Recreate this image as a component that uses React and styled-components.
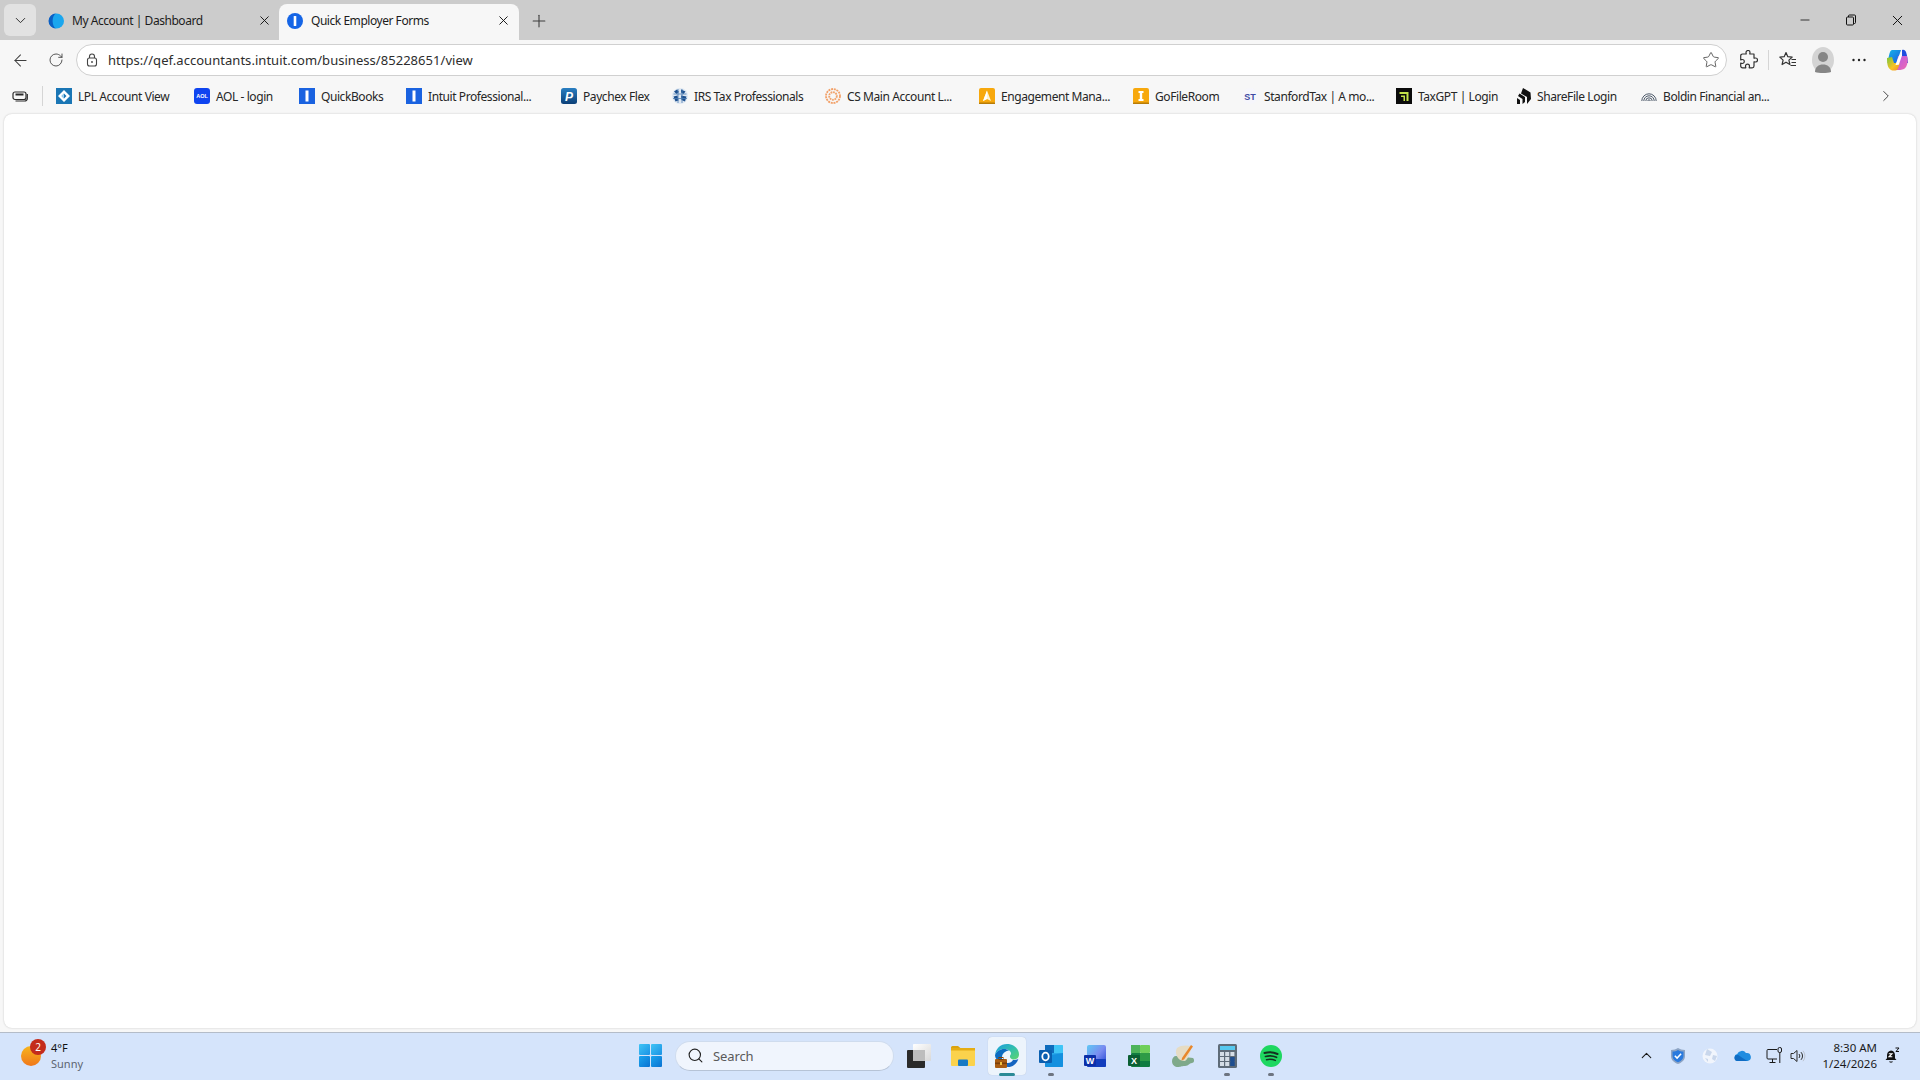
import React from "react";
import styled, { createGlobalStyle } from "styled-components";
import { ChevronDown, X, Plus, ArrowLeft, RotateCw, Star, Minus, ChevronRight, ChevronUp, Search as SearchIcon } from "lucide-react";

const Global = createGlobalStyle`
  html, body { margin: 0; padding: 0; width: 1920px; height: 1080px; overflow: hidden; background: #f7f7f7; }
  body { font-family: "Noto Sans", "Open Sans", sans-serif; color: #1f1f1f; }
`;

const Page = styled.div`
  width: 1920px; height: 1080px; display: flex; flex-direction: column; background: #f7f7f7;
`;

/* ---------- tab strip ---------- */
const TabStrip = styled.div`
  height: 40px; background: #cccccc; display: flex; align-items: flex-end; padding-left: 4px; flex: none;
`;
const TabMenu = styled.div`
  width: 32px; height: 32px; margin-bottom: 4px; border-radius: 6px; background: #e2e2e2;
  display: flex; align-items: center; justify-content: center; color: #333;
`;
const Tab = styled.div`
  width: 240px; height: 36px; box-sizing: border-box; display: flex; align-items: center; padding: 0 8px 3px;
  border-radius: 8px 8px 0 0; background: ${p => (p.$active ? "#f7f7f7" : "transparent")};
  margin-left: ${p => p.$ml || 0}px;
`;
const TabTitle = styled.span`
  flex: 1; margin-left: 8px; font-size: 12px; letter-spacing: -0.46px; color: #1c1c1c; white-space: nowrap;
`;
const NewTab = styled.div`
  width: 32px; height: 36px; margin-left: 4px; padding-bottom: 3px; box-sizing: border-box; display: flex; align-items: center; justify-content: center; color: #3c3c3c;
`;
const Spacer = styled.div`flex: 1;`;
const WinBtn = styled.div`
  width: 46px; height: 40px; align-self: flex-start; display: flex; align-items: center; justify-content: center; color: #111;
`;

/* ---------- toolbar ---------- */
const Toolbar = styled.div`
  height: 36px; flex: none; box-sizing: border-box; padding-top: 4px; display: flex; align-items: flex-start; background: #f7f7f7;
`;
const NavBtn = styled.div`
  width: 36px; height: 32px; margin-left: ${p => p.$ml || 0}px; display: flex; align-items: center; justify-content: center; color: #3d3d3d; flex: none;
`;
const AddressBar = styled.div`
  width: 1651px; height: 32px; box-sizing: border-box; margin-left: 2px; border: 1px solid #d0d0d0; border-radius: 16px; background: #fff;
  display: flex; align-items: center; padding: 0 6px 0 8px; flex: none;
`;
const Url = styled.span`
  flex: 1; margin-left: 9px; font-size: 13px; letter-spacing: 0.04px; color: #2d2d2d; white-space: nowrap;
`;
const ToolIcons = styled.div`
  flex: 1; height: 32px; display: flex; align-items: center; padding-left: 11px; color: #333;
`;
const ToolSep = styled.div`
  width: 1px; height: 20px; background: #d5d5d5; margin: 0 9px 0 10px;
`;

/* ---------- bookmarks ---------- */
const BookmarkBar = styled.div`
  height: 38px; flex: none; box-sizing: border-box; padding: 2px 0 0 12px; display: flex; align-items: center; background: #f7f7f7;
`;
const BarSep = styled.div`
  width: 1px; height: 20px; background: #d5d5d5; margin: 0 13px 0 14px;
`;
const Bookmark = styled.div`
  display: flex; align-items: center; gap: 6px; margin-right: ${p => p.$gap ?? 23}px; flex: none;
`;
const BookmarkLabel = styled.span`
  display: block; width: ${p => p.$w}px; font-size: 12px; letter-spacing: -0.42px; color: #262626; white-space: nowrap;
`;
const BarMore = styled.div`
  margin-left: auto; width: 34px; padding-right: 17px; display: flex; justify-content: center; color: #333;
`;

/* ---------- content ---------- */
const Viewport = styled.div`
  flex: 1; margin: 0 4px 4px; background: #fff; border-radius: 8px;
  box-shadow: 0 0 2px rgba(0,0,0,.22);
`;

/* ---------- taskbar ---------- */
const Taskbar = styled.div`
  height: 48px; flex: none; box-sizing: border-box; border-top: 1px solid #b4bcc8; background: #d5e4fb; padding-bottom: 2px;
  display: flex; align-items: center; position: relative;
`;
const Weather = styled.div`
  width: 639px; flex: none; box-sizing: border-box; padding-left: 21px; display: flex; align-items: center; gap: 10px;
`;
const Sun = styled.div`
  position: relative; width: 20px; height: 20px; border-radius: 50%;
  background: linear-gradient(180deg, #f7b51d, #f0771a);
`;
const Badge = styled.span`
  position: absolute; left: 9px; top: -7px; width: 16px; height: 16px;
  border-radius: 50%; background: #c42b1c; color: #fff; font-size: 10px; line-height: 16px; text-align: center;
`;
const WeatherText = styled.div`display: flex; flex-direction: column;`;
const Temp = styled.span`font-size: 11px; line-height: 16px; color: #111;`;
const Cond = styled.span`font-size: 11px; line-height: 16px; color: #5c6470;`;
const StartBtn = styled.div`width: 24px; height: 24px; display: flex; align-items: center; flex: none;`;
const SearchPill = styled.div`
  width: 219px; height: 30px; box-sizing: border-box; margin-left: 12px; border-radius: 15px; background: #f0f5fd;
  border: 1px solid #cfdcee; border-bottom-color: #b6c3d6; display: flex; align-items: center; padding-left: 11px; gap: 9px; flex: none;
`;
const SearchText = styled.span`font-size: 13px; letter-spacing: -0.1px; color: #5a5a5a;`;
const Apps = styled.div`display: flex; align-items: center; margin-left: 3px; flex: none;`;
const AppBtn = styled.div`
  position: relative; width: 44px; height: 38px; display: flex; align-items: center; justify-content: center; flex: none; border-radius: 4px;
  ${p => p.$active && `&::before { content: ""; position: absolute; left: 3px; right: 3px; top: 0; bottom: 0; background: #edf4fc; border-radius: 4px; box-shadow: 0 0 1px rgba(0,0,0,.2); }`}
  & > svg { position: relative; }
`;
const RunDot = styled.span`
  position: absolute; bottom: -1px; left: 50%; transform: translateX(-50%); height: 3px; border-radius: 2px;
  width: ${p => (p.$active ? 16 : 6)}px; background: ${p => (p.$active ? "#2b8a96" : "#6d7480")};
`;
const Tray = styled.div`
  position: absolute; right: 13px; top: 0; bottom: 2px; display: flex; align-items: center;
`;
const TrayIcon = styled.div`
  width: ${p => p.$w || 32}px; margin-left: ${p => p.$ml || 0}px; display: flex; justify-content: center; align-items: center; flex: none; color: #1a1a1a;
`;
const Clock = styled.div`
  display: flex; flex-direction: column; align-items: flex-end; margin-left: 16px; font-size: 11.500px; line-height: 16px; color: #1a1a1a;
`;

/* ---------- icons ---------- */
const EdgeFav = () => (
  <svg width="16" height="16" viewBox="0 0 16 16"><circle cx="8.500" cy="8" r="7.500" fill="#1aa6ee" /><path d="M8 .5a7.500 7.500 0 0 0 0 15c-2-1-3.400-4-3.400-7.500S6 1.500 8 .5z" fill="#0a5fc4" /></svg>
);
const IntuitRound = () => (
  <svg width="16" height="16" viewBox="0 0 16 16"><circle cx="8" cy="8" r="8" fill="#1565e6" /><rect x="6.700" y="3" width="2.600" height="10" rx=".6" fill="#fff" /></svg>
);
const IntuitSquare = () => (
  <svg width="16" height="16" viewBox="0 0 16 16"><rect width="16" height="16" fill="#1a62e0" /><rect x="6.500" y="2.500" width="3" height="11" fill="#fff" /></svg>
);
const LplIcon = () => (
  <svg width="16" height="16" viewBox="0 0 16 16"><rect width="16" height="16" fill="#1a76b5" /><path d="M8 2l6 6-6 6-6-6z M8 5.500L5.500 8 8 10.500 10.500 8z" fill="#fff" fillRule="evenodd" /><path d="M8 5.500L5.500 8 8 10.500z" fill="#9fd0ee" /></svg>
);
const AolIcon = () => (
  <svg width="16" height="16" viewBox="0 0 16 16"><rect width="16" height="16" rx="3" fill="#0f44f0" /><text x="8" y="10" textAnchor="middle" fontSize="5.500" fontWeight="700" fill="#fff" fontFamily="Liberation Sans">AOL</text></svg>
);
const PaychexIcon = () => (
  <svg width="16" height="16" viewBox="0 0 16 16"><defs><linearGradient id="pc" x1="0" y1="0" x2="0" y2="1"><stop offset="0" stopColor="#2a7fc2" /><stop offset="1" stopColor="#0b3f77" /></linearGradient></defs><rect width="16" height="16" rx="2.500" fill="url(#pc)" /><text x="8" y="12.500" textAnchor="middle" fontSize="12" fontWeight="700" fontStyle="italic" fill="#fff" fontFamily="Liberation Sans">P</text></svg>
);
const IrsIcon = () => (
  <svg width="16" height="16" viewBox="0 0 16 16"><circle cx="8" cy="8" r="8" fill="#dfe8f2" /><path d="M2 3.500l3-2 2 2.500-2.500 2zM9 1.500l4.500 2-2 2.500-2.500-1.500zM1.500 8.500l4-1 1 5-3 1zM9 7.500l5.500 1-1.500 5-3.500-1.500z" fill="#1c4f8e" /><path d="M1.500 6h13M1 10.500h14M6 1v14M10 1v14" stroke="#4d7bb0" strokeWidth=".8" /></svg>
);
const CsIcon = () => (
  <svg width="16" height="16" viewBox="0 0 16 16" fill="none"><circle cx="8" cy="8" r="7" stroke="#f2a068" strokeWidth="1.800" strokeDasharray="2 .8" /><circle cx="8" cy="8" r="3.800" stroke="#f0a36c" strokeWidth="1.800" strokeDasharray="1.800 .7" /></svg>
);
const EngIcon = () => (
  <svg width="16" height="16" viewBox="0 0 16 16"><rect width="16" height="16" rx="2" fill="#f7a80d" /><rect y="14.500" width="16" height="1.500" fill="#b87c06" /><path d="M8 2.500l4 10.500-4-2-4 2z" fill="#fff3d0" /><path d="M8 2.500L4 13l4-2z" fill="#fff" /></svg>
);
const GfrIcon = () => (
  <svg width="16" height="16" viewBox="0 0 16 16"><rect width="16" height="16" rx="2" fill="#f7a80d" /><rect y="14.500" width="16" height="1.500" fill="#b87c06" /><rect x="5.500" y="3" width="5" height="2" fill="#fff" /><rect x="6.800" y="4" width="2.400" height="8" fill="#fff" /><rect x="5.500" y="11" width="5" height="2" fill="#fff" /></svg>
);
const StIcon = () => (
  <svg width="16" height="16" viewBox="0 0 16 16"><circle cx="8" cy="8" r="8" fill="#f6f6fb" /><text x="8" y="11.500" textAnchor="middle" fontSize="9" fontWeight="700" fill="#3f4ba3" fontFamily="Liberation Sans">ST</text></svg>
);
const GptIcon = () => (
  <svg width="16" height="16" viewBox="0 0 16 16"><rect width="16" height="16" fill="#0b0b0b" /><path d="M3.500 4h9v9h-2V6h-7z M5 7.500h4v5.500H7.500V9H5z" fill="#c3e34a" /></svg>
);
const ShareIcon = () => (
  <svg width="14" height="16" viewBox="0 0 14 16"><path d="M6 0l7.500 4.500L14 11l-4 5V9L4 5.500zM2.500 5.500L8 9v5L5.500 16v-5L1 8zM0 10l3 2v4H0z" fill="#111" /></svg>
);
const BoldinIcon = () => (
  <svg width="16" height="16" viewBox="0 0 16 16" fill="none" stroke="#4f5b6b" strokeWidth="1"><path d="M.8 13a7.200 7.200 0 0 1 14.400 0M2.800 13a5.200 5.200 0 0 1 10.400 0M4.800 13a3.200 3.200 0 0 1 6.400 0M6.800 13a1.200 1.200 0 0 1 2.400 0" /></svg>
);
const TabsIcon = () => (
  <svg width="16" height="16" viewBox="0 0 16 16" fill="none" stroke="#2a2a2a" strokeWidth="1.200"><rect x="1" y="4" width="13" height="7.500" rx="2" /><path d="M3.500 6.500h8" strokeWidth="2" /><path d="M15.300 6v4.500a2.500 2.500 0 0 1-2.500 2.500H3.500" /></svg>
);
const Lock = () => (
  <svg width="14" height="14" viewBox="0 0 14 14" fill="none" stroke="#444" strokeWidth="1.100"><rect x="2.500" y="5" width="9" height="8" rx="2" /><path d="M4.500 5V3.500a2.500 2.500 0 0 1 5 0V5" /><circle cx="7" cy="9" r=".9" fill="#444" stroke="none" /></svg>
);
const Restore = () => (
  <svg width="12" height="12" viewBox="0 0 12 12" fill="none" stroke="#111"><rect x="1.500" y="3" width="7" height="8" rx="1" /><path d="M3.500 3V2a1 1 0 0 1 1-1h5a1 1 0 0 1 1 1v6.500a1 1 0 0 1-1 1h-1" /></svg>
);
const Puzzle = () => (
  <svg width="20" height="20" viewBox="0 0 20 20" fill="none" stroke="#333" strokeWidth="1.200" strokeLinejoin="round"><path d="M8 2.500a2 2 0 0 1 4 0c0 .8-.3 1.200-.2 1.500h4.200v4.200c.3.100.7-.2 1.500-.2a2 2 0 0 1 0 4c-.8 0-1.200-.3-1.500-.2V16c0 1-.8 1.800-1.800 1.800h-3c-.1-.4.300-.9.300-1.600a2 2 0 0 0-4 0c0 .7.400 1.200.3 1.600H4.500A1.800 1.800 0 0 1 2.700 16v-2.800c.4-.1.900.3 1.600.3a2 2 0 0 0 0-4c-.7 0-1.200.4-1.600.3V5.800A1.800 1.800 0 0 1 4.500 4h3.700c.1-.3-.2-.7-.2-1.500z" /></svg>
);
const FavList = () => (
  <svg width="20" height="20" viewBox="0 0 20 20" fill="none" stroke="#333" strokeWidth="1.200" strokeLinejoin="round"><path d="M8 2.500l1.800 4.200 4.400.4-3.300 3 1 4.400L8 12.200l-3.900 2.300 1-4.400-3.300-3 4.400-.4z" /><path d="M13.500 9.500h4.500M13.500 12.500h4.500M12.500 15.500h5.500" /></svg>
);
const Avatar = () => (
  <svg width="22" height="26" viewBox="0 0 22 26"><ellipse cx="11" cy="13" rx="11" ry="13" fill="#d4d4d4" /><circle cx="11" cy="10" r="5" fill="#868686" /><path d="M3 25c0-5 3.500-7.500 8-7.500s8 2.500 8 7.500c-2 .7-5 1-8 1s-6-.3-8-1z" fill="#868686" /></svg>
);
const Dots = () => (
  <svg width="16" height="4" viewBox="0 0 16 4"><circle cx="2.500" cy="2" r="1.200" fill="#222" /><circle cx="8" cy="2" r="1.200" fill="#222" /><circle cx="13.500" cy="2" r="1.200" fill="#222" /></svg>
);
const Copilot = () => (
  <svg width="23" height="24" viewBox="0 0 23 24">
    <defs>
      <linearGradient id="cA" x1="0" y1="0" x2="1" y2="1"><stop offset="0" stopColor="#16b5e8" /><stop offset="1" stopColor="#1c5be0" /></linearGradient>
      <linearGradient id="cB" x1="0" y1="0" x2="1" y2="1"><stop offset="0" stopColor="#b65be8" /><stop offset="1" stopColor="#f06ab0" /></linearGradient>
      <linearGradient id="cC" x1="0" y1="0" x2="1" y2="1"><stop offset="0" stopColor="#78c83a" /><stop offset=".6" stopColor="#f9c323" /><stop offset="1" stopColor="#f08a2b" /></linearGradient>
    </defs>
    <path d="M6 2h9l-4.500 13H1.500C3 9 3 3 6 2z" fill="url(#cA)" />
    <path d="M16 2c2-1 3.500.5 4 2 1.500 4 1.500 8 2 11h-6z" fill="#1f4de0" />
    <path d="M12 8h9c1.500 4 .5 11-3 13-2 1-5 1-8 1z" fill="url(#cB)" />
    <path d="M1 10c0 5 .5 10 4 12 1.500.7 4 .7 6 0 1-1 2-4 3-7H8L6 9z" fill="url(#cC)" />
    <path d="M9.500 17c1.200-3.500 2.300-6.500 3.500-9.500h3L12.800 16.800z" fill="#fff" />
  </svg>
);
const WinLogo = () => (
  <svg width="23" height="23" viewBox="0 0 23 23">
    <defs>
      <linearGradient id="w1" x1="0" y1="0" x2="1" y2="1"><stop offset="0" stopColor="#3fc4f5" /><stop offset="1" stopColor="#1b92e5" /></linearGradient>
      <linearGradient id="w2" x1="0" y1="0" x2="1" y2="1"><stop offset="0" stopColor="#1ba5ee" /><stop offset="1" stopColor="#0a72d2" /></linearGradient>
    </defs>
    <rect width="11" height="11" rx="1" fill="url(#w1)" /><rect x="12" width="11" height="11" rx="1" fill="url(#w1)" />
    <rect y="12" width="11" height="11" rx="1" fill="url(#w2)" /><rect x="12" y="12" width="11" height="11" rx="1" fill="url(#w2)" />
  </svg>
);
const Copy = () => (
  <svg width="24" height="24" viewBox="0 0 24 24">
    <defs><linearGradient id="cp" x1="0" y1="0" x2="1" y2="1"><stop offset="0" stopColor="#ffffff" /><stop offset="1" stopColor="#d8d8d8" /></linearGradient></defs>
    <rect x="6" y="0" width="18" height="17" rx="1" fill="url(#cp)" /><rect x="0" y="6" width="18" height="18" rx="1" fill="#2a2a2a" /><rect x="6" y="6" width="12" height="11" fill="#bdbdbd" />
  </svg>
);
const Folder = () => (
  <svg width="24" height="24" viewBox="0 0 24 24"><path d="M0 3.500A1.500 1.500 0 0 1 1.500 2h5.500l3 2.500h-10z" fill="#dba30f" /><rect y="4" width="24" height="3" fill="#e5ad14" /><path d="M0 6.500h24V21a1 1 0 0 1-1 1H1a1 1 0 0 1-1-1z" fill="#fbd24c" /><rect x="7" y="15.500" width="10" height="6.500" rx="1" fill="#1779c4" /></svg>
);
const EdgeWork = () => (
  <svg width="24" height="25" viewBox="0 0 24 25">
    <defs>
      <linearGradient id="e1" x1="0" y1="0" x2="1" y2="1"><stop offset="0" stopColor="#1b9de2" /><stop offset=".55" stopColor="#35c1a9" /><stop offset="1" stopColor="#5ed66a" /></linearGradient>
    </defs>
    <path d="M12 1c7 0 12 5 12 10.500 0 3.500-3 5.500-6 5-2.400-.4-3.300-2-3-3.500.2-1 1-1.500 1-2.500C16 8 13 6 9 6c-4 0-7.500 2.500-9 6C.8 5.500 5.500 1 12 1z" fill="url(#e1)" />
    <path d="M0 12c1.500-3.500 5-6 9-6 2 0 4 .5 5 1.500-4 .5-7 3.500-7 6.500v2H1.500C.5 15 0 13.500 0 12z" fill="#0c6cc2" />
    <path d="M18 17c2 .3 4 0 5.400-1.200C22 20.500 18 24 13 24c-1 0-2-.2-3-.5V20h3c2 0 4-1 5-3z" fill="#1565c0" />
    <rect x="0" y="16" width="12" height="9" rx="1" fill="#a85c13" /><rect x="0" y="19.500" width="12" height="1.600" fill="#7a3f0a" /><rect x="4" y="14.500" width="4" height="2" fill="none" stroke="#7a3f0a" /><rect x="5" y="19" width="2" height="3" fill="#f0c040" />
  </svg>
);
const Outlook = () => (
  <svg width="24" height="24" viewBox="0 0 24 24">
    <rect x="6" y="1" width="18" height="22" rx="1" fill="#28a8ea" /><rect x="6" y="1" width="9" height="8" fill="#0f6cbd" /><rect x="15" y="1" width="9" height="8" fill="#50d9ff" opacity=".6" />
    <path d="M6 12l18-3v13a1 1 0 0 1-1 1H7a1 1 0 0 1-1-1z" fill="#1490df" />
    <rect x="0" y="6" width="13" height="13" rx="1" fill="#0a5fb0" /><ellipse cx="6.500" cy="12.500" rx="3.200" ry="3.800" fill="none" stroke="#fff" strokeWidth="1.800" />
  </svg>
);
const Word = () => (
  <svg width="22" height="24" viewBox="0 0 22 24">
    <defs><linearGradient id="wd" x1="0" y1="0" x2="1" y2="1"><stop offset="0" stopColor="#5fc8f5" /><stop offset=".5" stopColor="#7a8cf0" /><stop offset="1" stopColor="#1a3fd0" /></linearGradient></defs>
    <rect x="3" y="1" width="19" height="22" rx="2" fill="url(#wd)" /><rect x="3" y="15" width="19" height="8" rx="1" fill="#123dbd" />
    <rect x="0" y="11" width="12" height="11" rx="1" fill="#0c2fa8" /><text x="6" y="20" textAnchor="middle" fontSize="9" fontWeight="700" fill="#fff" fontFamily="Liberation Sans">W</text>
  </svg>
);
const Excel = () => (
  <svg width="22" height="24" viewBox="0 0 22 24">
    <rect x="3" y="1" width="9" height="8" fill="#4db35a" /><rect x="12" y="1" width="10" height="8" rx="1" fill="#6fcf5a" />
    <rect x="3" y="9" width="19" height="14" rx="1" fill="#107c41" /><rect x="12" y="9" width="10" height="8" fill="#2e9b46" />
    <rect x="0" y="11" width="12" height="11" rx="1" fill="#0b5f33" /><text x="6" y="20" textAnchor="middle" fontSize="9" fontWeight="700" fill="#fff" fontFamily="Liberation Sans">X</text>
  </svg>
);
const Pen = () => (
  <svg width="24" height="24" viewBox="0 0 24 24">
    <path d="M1 17c0-3 2-5 4-5l17 2c2 2 1 5-1 5-3 0-3 3-7 3s-4 1-7 1-6-2-6-6z" fill="#7fa98a" />
    <path d="M6 4c3-3 10-3 14-2 0 5-2 12-6 15-3 0-6-1-7-3C5 11 4 7 6 4z" fill="#e6dcc4" />
    <path d="M20 1l2 1.500-9 13-2.500 1 .5-2.500z" fill="#e8872a" />
  </svg>
);
const Calc = () => (
  <svg width="19" height="24" viewBox="0 0 19 24">
    <rect width="19" height="24" rx="1.500" fill="#5e6b78" /><rect x="2" y="2" width="15" height="4" fill="#56c8ef" />
    {[0, 1, 2].map(r => [0, 1, 2].map(c => (
      <rect key={`${r}${c}`} x={2 + c * 5.2} y={8 + r * 5} width="4" height="4" fill={c === 2 && r > 0 ? "#1f4e8f" : "#d4dde6"} />
    )))}
    <rect x="12.400" y="13" width="4.100" height="9" fill="#1f4e8f" />
  </svg>
);
const Spotify = () => (
  <svg width="22" height="22" viewBox="0 0 22 22" fill="none" stroke="#14301f" strokeLinecap="round"><circle cx="11" cy="11" r="11" fill="#1ed760" stroke="none" /><path d="M4.500 8c4-1.200 9-1 13 1" strokeWidth="2" /><path d="M5.500 11.500c3.500-1 7.500-.8 11 .8" strokeWidth="1.700" /><path d="M6.500 14.700c3-.7 6-.5 8.800.7" strokeWidth="1.500" /></svg>
);
const Shield = () => (
  <svg width="14" height="16" viewBox="0 0 14 16"><path d="M7 0c2 1.300 4 2 7 2v6c0 4-3 6.500-7 8-4-1.500-7-4-7-8V2c3 0 5-.7 7-2z" fill="#8da4c4" /><path d="M7 2c1.600 1 3.500 1.500 5.500 1.500V8c0 3-2.200 5-5.500 6.300C3.700 13 1.500 11 1.500 8V3.500C3.500 3.500 5.400 3 7 2z" fill="#2a7ade" /><path d="M3.800 7.700l2.300 2.400 4-4.300" stroke="#fff" strokeWidth="1.500" fill="none" /></svg>
);
const Globe = () => (
  <svg width="16" height="16" viewBox="0 0 16 16"><circle cx="8" cy="8" r="7.500" fill="#f1f5fc" /><path d="M5 1l5 3-2 4-5-1zM11 7l4 1-2 5-3-2zM3 10l3 1v3" fill="#c9d7ec" /></svg>
);
const Cloud = () => (
  <svg width="17" height="11" viewBox="0 0 17 11"><path d="M4 11a3.500 3.500 0 0 1-.8-6.900A5 5 0 0 1 12 3a3.700 3.700 0 0 1 1.500 8z" fill="#1f8ce0" /><path d="M3.500 11a3 3 0 0 1 0-6c2 0 3 2 5 3s3 2 5 3z" fill="#0f6cc4" /></svg>
);
const Network = () => (
  <svg width="17" height="17" viewBox="0 0 17 17" fill="none" stroke="#1a1a1a" strokeWidth="1"><path d="M11 2.500H2a1 1 0 0 0-1 1V11a1 1 0 0 0 1 1h9" /><path d="M6.500 12v3M3.500 15.500h6" /><rect x="12" y=".5" width="3.500" height="5" rx="1.500" /><path d="M13.800 5.500V16" /></svg>
);
const Speaker = () => (
  <svg width="16" height="16" viewBox="0 0 16 16" fill="none" stroke="#2a2a2a" strokeWidth="1"><path d="M1 5.500h2.500L7 2.500v11l-3.500-3H1z" strokeLinejoin="round" /><path d="M9 6a3 3 0 0 1 0 4M11 4.200a5.500 5.500 0 0 1 0 7.600" /><path d="M13 2.800a8 8 0 0 1 0 10.400" stroke="#bcc3cf" /></svg>
);
const BellZ = () => (
  <svg width="15" height="17" viewBox="0 0 15 17"><path d="M6 3.500c-3 .4-4 2.700-4 5v2.800L.5 13h11L10 11.300V8.500c0-2.500-1-4.600-4-5z" fill="#111" /><path d="M4 14.500h4c-.3 1.500-3.700 1.500-4 0z" fill="#111" /><path d="M10.500 1h3.500l-3 3.500h3" stroke="#111" strokeWidth="1" fill="none" /><path d="M3.800 6.700H7L4 9.800h3.300" stroke="#fff" strokeWidth="1.100" fill="none" /></svg>
);

const bookmarks = [
  [LplIcon, "LPL Account View", 93],
  [AolIcon, "AOL - login", 60],
  [IntuitSquare, "QuickBooks", 62],
  [IntuitSquare, "Intuit Professional...", 110, 23],
  [PaychexIcon, "Paychex Flex", 66],
  [IrsIcon, "IRS Tax Professionals", 109, 22],
  [CsIcon, "CS Main Account L...", 110, 22],
  [EngIcon, "Engagement Mana...", 110, 22],
  [GfrIcon, "GoFileRoom", 64],
  [StIcon, "StanfordTax | A mo...", 110, 22],
  [GptIcon, "TaxGPT | Login", 76],
  [ShareIcon, "ShareFile Login", 81],
  [BoldinIcon, "Boldin Financial an...", 110],
];

const apps = [
  [Copy], [Folder], [EdgeWork, "active"], [Outlook, "dot"], [Word], [Excel], [Pen], [Calc, "dot"], [Spotify, "dot"],
];

export default function App() {
  return (
    <Page>
      <Global />
      <TabStrip>
        <TabMenu><ChevronDown size={17} strokeWidth={1.4} /></TabMenu>
        <Tab $ml={4}>
          <EdgeFav />
          <TabTitle>My Account | Dashboard</TabTitle>
          <X size={15} strokeWidth={1.5} color="#111" />
        </Tab>
        <Tab $active $ml={-1}>
          <IntuitRound />
          <TabTitle>Quick Employer Forms</TabTitle>
          <X size={15} strokeWidth={1.5} color="#111" />
        </Tab>
        <NewTab><Plus size={20} strokeWidth={1.3} /></NewTab>
        <Spacer />
        <WinBtn><Minus size={14} strokeWidth={1.4} /></WinBtn>
        <WinBtn><Restore /></WinBtn>
        <WinBtn><X size={17} strokeWidth={1.4} /></WinBtn>
      </TabStrip>
      <Toolbar>
        <NavBtn $ml={2}><ArrowLeft size={19} strokeWidth={1.3} /></NavBtn>
        <NavBtn><RotateCw size={16} strokeWidth={1.3} /></NavBtn>
        <AddressBar>
          <Lock />
          <Url>https://qef.accountants.intuit.com/business/85228651/view</Url>
          <Star size={18} strokeWidth={1.1} color="#444" />
        </AddressBar>
        <ToolIcons>
          <Puzzle />
          <ToolSep />
          <FavList />
          <TrayIcon $w={38} $ml={6}><Avatar /></TrayIcon>
          <TrayIcon $w={34} $ml={0}><Dots /></TrayIcon>
          <TrayIcon $w={28} $ml={7}><Copilot /></TrayIcon>
        </ToolIcons>
      </Toolbar>
      <BookmarkBar>
        <TabsIcon />
        <BarSep />
        {bookmarks.map(([Icon, label, w, gap]) => (
          <Bookmark key={label} $gap={gap}>
            <Icon />
            <BookmarkLabel $w={w}>{label}</BookmarkLabel>
          </Bookmark>
        ))}
        <BarMore><ChevronRight size={18} strokeWidth={1.2} /></BarMore>
      </BookmarkBar>
      <Viewport />
      <Taskbar>
        <Weather>
          <Sun><Badge>2</Badge></Sun>
          <WeatherText>
            <Temp>4°F</Temp>
            <Cond>Sunny</Cond>
          </WeatherText>
        </Weather>
        <StartBtn><WinLogo /></StartBtn>
        <SearchPill>
          <SearchIcon size={17} strokeWidth={1.6} color="#222" />
          <SearchText>Search</SearchText>
        </SearchPill>
        <Apps>
          {apps.map(([Icon, state], i) => (
            <AppBtn key={i} $active={state === "active"}>
              <Icon />
              {state && <RunDot $active={state === "active"} />}
            </AppBtn>
          ))}
        </Apps>
        <Tray>
          <TrayIcon><ChevronUp size={17} strokeWidth={1.5} /></TrayIcon>
          <TrayIcon><Shield /></TrayIcon>
          <TrayIcon><Globe /></TrayIcon>
          <TrayIcon><Cloud /></TrayIcon>
          <TrayIcon $w={32}><Network /></TrayIcon>
          <TrayIcon $w={16}><Speaker /></TrayIcon>
          <Clock><span>8:30 AM</span><span>1/24/2026</span></Clock>
          <TrayIcon $w={30}><BellZ /></TrayIcon>
        </Tray>
      </Taskbar>
    </Page>
  );
}
